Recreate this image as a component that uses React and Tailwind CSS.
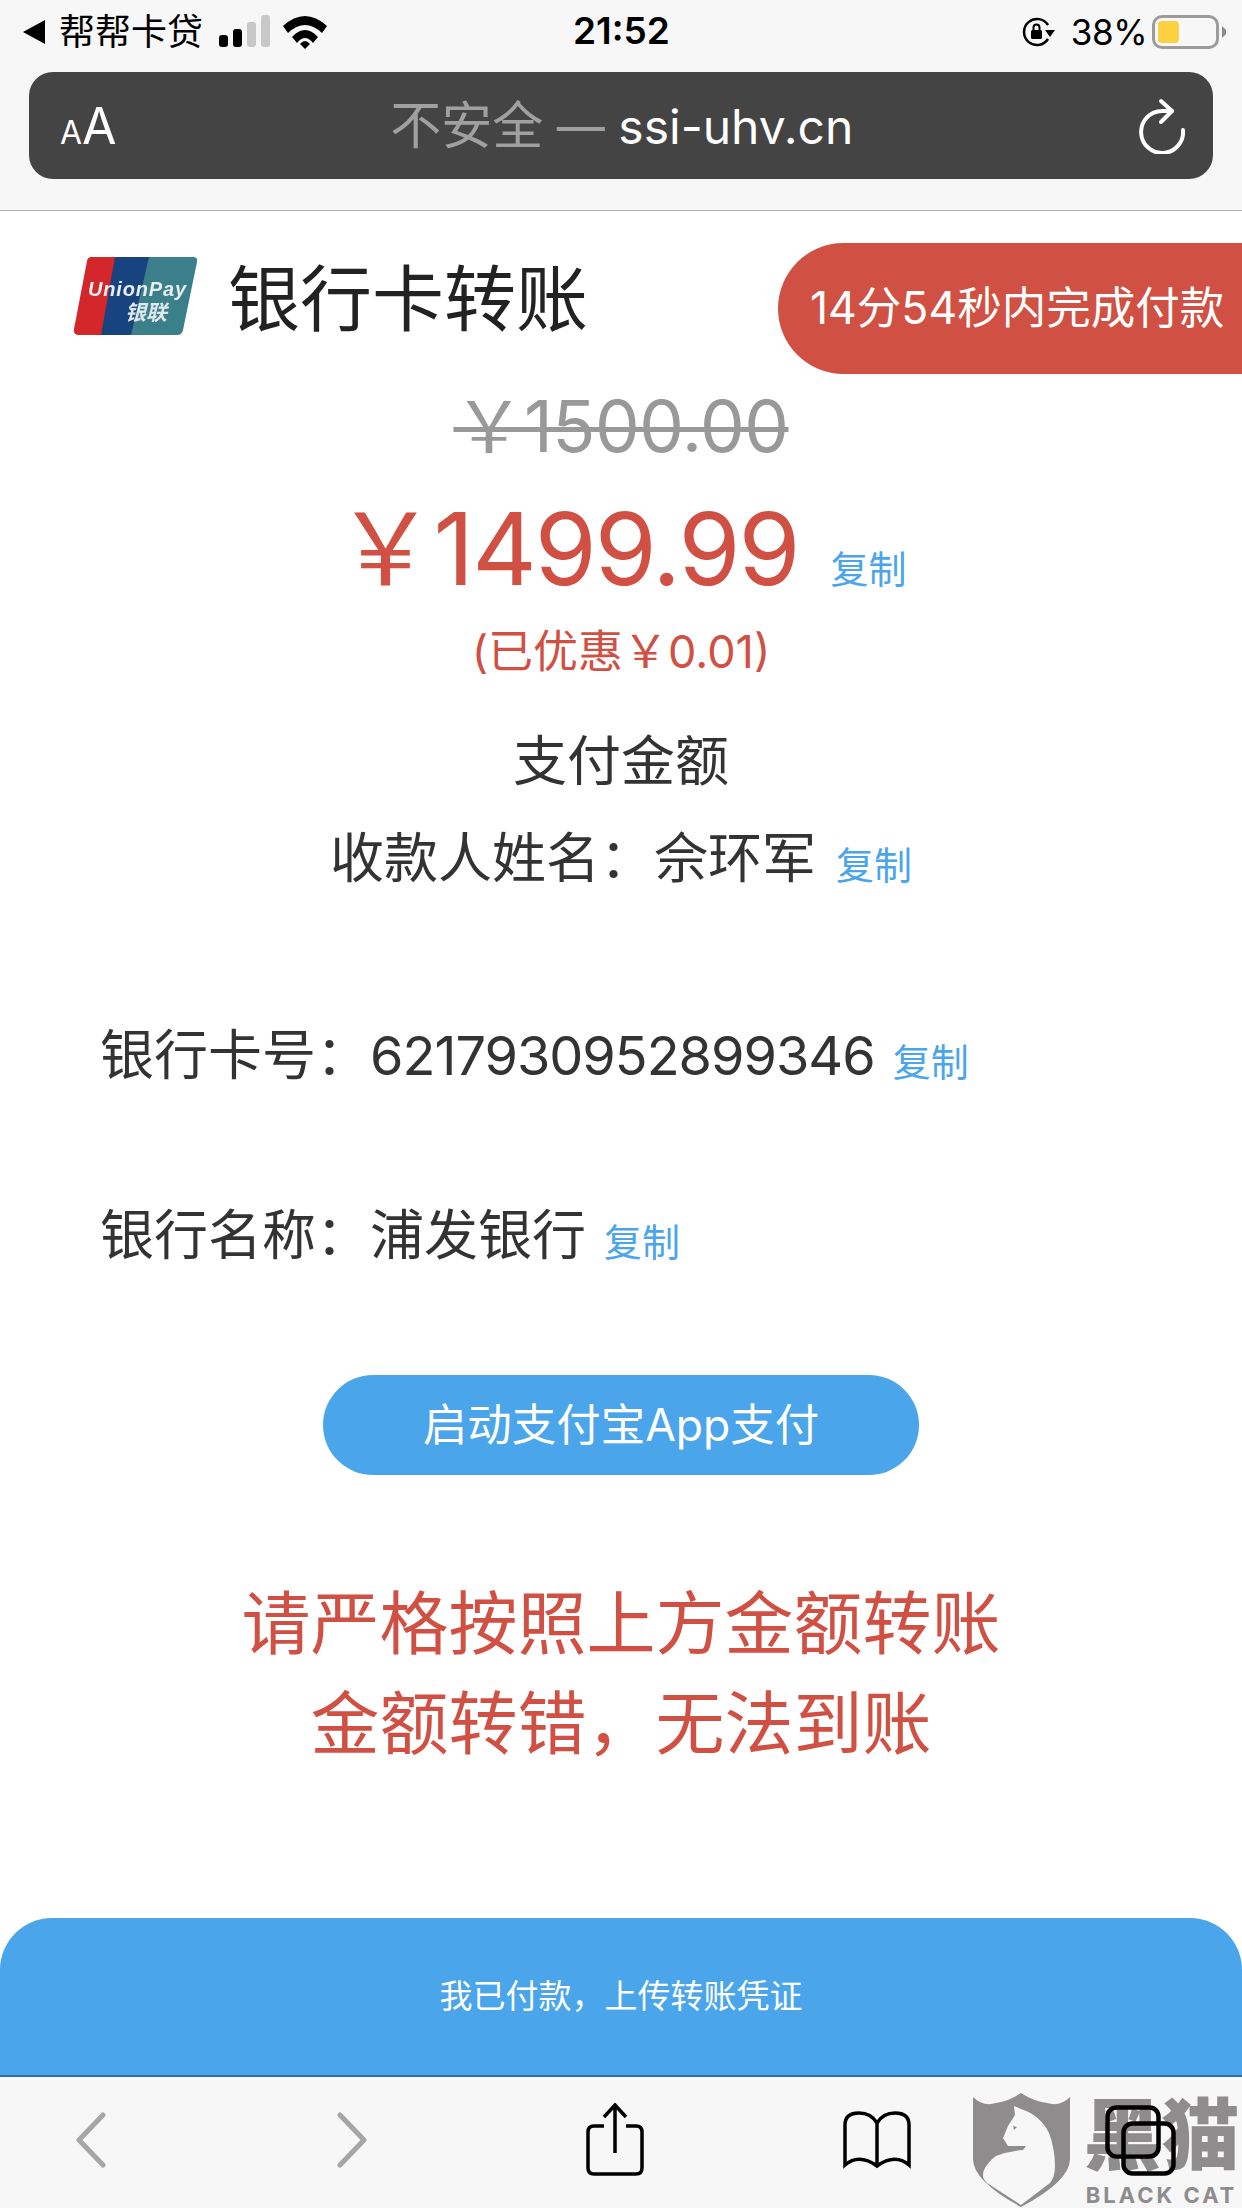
import React from 'react';

const SANS = 'font-["Inter","Noto_Sans_CJK_SC",sans-serif]';

const CopyLink = ({ className = '' }) => (
  <span className={`text-[38px] leading-none text-[#4aa5ea] ${className}`}>复制</span>
);

const UnionPayLogo = () => (
  <svg width="126" height="82" viewBox="0 0 126 82" className="mb-[6px] shrink-0 blur-[0.7px]">
    <path d="M18 2h40L40 80H6Q0 80 1 74L14 6Q15 2 18 2Z" fill="#d3272c" />
    <path d="M42 2h40L66 80H28Z" fill="#17437f" />
    <path d="M76 2h44q5 0 4 5l-14 68q-1 5-6 5H58Z" fill="#3b7f8b" />
    <text x="15" y="41" fontSize="20" fontStyle="italic" fontWeight="700" fill="#e8eef0" fontFamily="Liberation Sans" textLength="98">UnionPay</text>
    <text x="52" y="65" fontSize="21" fontStyle="italic" fontWeight="700" fill="#dfe8ec" fontFamily="Noto Sans CJK SC">银联</text>
  </svg>
);

const StatusBar = () => (
  <div className="relative flex h-[64px] items-center justify-between pl-[22px] pr-[16px] text-black">
    <div className="flex items-center">
      <svg width="24" height="26" viewBox="0 0 24 26"><path d="M23 1v24L1 13Z" fill="#000" /></svg>
      <span className="ml-[13px] text-[36px] leading-none">帮帮卡贷</span>
      <svg width="52" height="34" viewBox="0 0 52 34" className="ml-[16px]">
        <rect x="0" y="20" width="9" height="12" rx="3" fill="#000" />
        <rect x="14" y="14" width="9" height="18" rx="3" fill="#000" />
        <rect x="28" y="7" width="9" height="25" rx="3" fill="#c8c8c8" />
        <rect x="42" y="0" width="9" height="32" rx="3" fill="#c8c8c8" />
      </svg>
      <svg width="44" height="33" viewBox="0 0 44 33" className="ml-[12px]">
        <path d="M0 10Q22-10 44 10l-5 7Q22 1 5 17Z" fill="#000" />
        <path d="M9 21Q22 7 35 21l-5 6Q22 17 14 27Z" fill="#000" />
        <path d="M17 28Q22 22 27 28l-5 5Z" fill="#000" />
      </svg>
    </div>
    <span className="absolute left-[573px] top-[11px] text-[37px] font-semibold leading-[40px]">21:52</span>
    <div className="flex items-center">
      <svg width="34" height="30" viewBox="0 0 34 30">
        <path d="M27 22A13 13 0 1 1 27 8" fill="none" stroke="#000" strokeWidth="2.500" />
        <path d="M24 13h10l-5 7Z" fill="#000" />
        <rect x="10" y="13" width="11" height="9" rx="1.500" fill="#000" />
        <path d="M12.500 13v-2.500a3 3 0 0 1 6 0V13" fill="none" stroke="#000" strokeWidth="2" />
      </svg>
      <span className="ml-[16px] text-[35px] leading-none tracking-[-0.5px]">38%</span>
      <div className="ml-[5px] flex h-[34px] w-[67px] items-center rounded-[10px] border-[3px] border-[#9b9b9b] px-[3px] py-[3px]">
        <div className="h-full w-[21px] rounded-[4px] bg-[#fbd041]" />
      </div>
      <svg width="4" height="12" viewBox="0 0 4 12" className="ml-[3px]"><path d="M0 0 4 4v4L0 12Z" fill="#8a8a8a" /></svg>
    </div>
  </div>
);

const AddressBar = () => (
  <div className="mx-[29px] mt-[8px] flex h-[107px] items-center justify-between rounded-[24px] bg-[#444444] pl-[31px] pr-[28px] text-white">
    <span className="flex items-baseline leading-none">
      <span className="text-[32px]">A</span>
      <span className="text-[50px]">A</span>
    </span>
    <div className="mr-[12px] flex items-baseline leading-none">
      <span className="text-[51px] text-[#a0a0a0]">不安全</span>
      <span className="text-[48px] text-[#a0a0a0]">&nbsp;—&nbsp;</span>
      <span className="text-[48px]">ssi-uhv.cn</span>
    </div>
    <svg width="46" height="56" viewBox="19 13 46 56" fill="none" stroke="#fff" strokeWidth="4" strokeLinecap="round" strokeLinejoin="round">
      <path d="M63 45A21 21 0 1 1 42 26H52" />
      <path d="M41 16 52 26 41 37" />
    </svg>
  </div>
);

const ToolBar = () => (
  <div className="relative flex h-[133px] items-center border-t-2 border-t-[#2f6ea5] bg-[#f7f7f7] pb-[6px]">
    <svg width="36" height="56" viewBox="0 0 36 56" fill="none" stroke="#a6a6a6" strokeWidth="5" strokeLinecap="round" strokeLinejoin="round" className="ml-[73px]">
      <path d="M30 3 6 28l24 25" />
    </svg>
    <svg width="36" height="56" viewBox="0 0 36 56" fill="none" stroke="#a6a6a6" strokeWidth="5" strokeLinecap="round" strokeLinejoin="round" className="ml-[225px]">
      <path d="M6 3l24 25L6 53" />
    </svg>
    <svg width="60" height="74" viewBox="0 0 60 74" fill="none" stroke="#000" strokeWidth="3.500" className="ml-[215px]">
      <path d="M19 23H9q-6 0-6 6v36q0 6 6 6h42q6 0 6-6V29q0-6-6-6H41" />
      <path d="M30 50V3M19 14 30 2l11 12" />
    </svg>
    <svg width="68" height="58" viewBox="0 0 68 58" fill="none" stroke="#000" strokeWidth="3.500" className="ml-[198px]">
      <path d="M34 12Q28 2 16 2 2 2 2 14v40Q16 42 34 55 52 42 66 54V14Q66 2 52 2 40 2 34 12v43" />
    </svg>

    {/* watermark */}
    <div className="pointer-events-none absolute left-[973px] top-[16px] flex items-start">
      <svg width="97" height="114" viewBox="0 0 97 114">
        <path d="M0 4Q10 14 23 10 36 8 48 0 60 8 74 10 87 14 97 4V66Q97 88 48 114 0 88 0 66Z" fill="#8e8c8c" />
        <path d="M41 13 48 16Q67 22 76 40 82 56 82 73 82 84 77 90L48 112 14 90Q10 86 10 83 10 78 12 75 16 68 23 63 36 58 50 57L53 53H35L30 45 35 33 42 22Z" fill="#f7f7f7" />
        <path d="M40 33l4 1-3 3Z" fill="#8e8c8c" />
      </svg>
      <div className="ml-[13px] mt-[5px] flex w-[157px] flex-col items-center text-[#8e8c8c]">
        <span className="text-[78px] font-black leading-[76px]">黑猫</span>
        <span className="mt-[10px] whitespace-nowrap text-[22px] font-bold leading-[22px] tracking-[3px]">BLACK CAT</span>
      </div>
    </div>

    <svg width="72" height="72" viewBox="0 0 72 72" fill="none" stroke="#000" strokeWidth="4.500" className="absolute left-[1105px] top-[28px]">
      <rect x="2.500" y="2.500" width="51" height="49" rx="9" />
      <rect x="18.500" y="18.500" width="50" height="50" rx="9" />
    </svg>
  </div>
);

export default function App() {
  return (
    <div className={`flex h-[2208px] w-[1242px] flex-col overflow-hidden bg-white ${SANS}`}>
      {/* browser chrome */}
      <div className="h-[211px] border-b border-b-[#b4b4b4] bg-[#f7f7f7]">
        <StatusBar />
        <AddressBar />
      </div>

      <div className="relative flex min-h-0 flex-1 flex-col">
        <div className="flex items-center pl-[73px] pt-[43px]">
          <UnionPayLogo />
          <span className="ml-[29px] text-[72px] leading-[90px] text-[#222] blur-[0.5px]">银行卡转账</span>
        </div>
        <div className="absolute right-0 top-[32px] flex h-[131px] w-[464px] items-center whitespace-nowrap rounded-l-[66px] bg-[#d05143] pl-[32px] text-[44.500px] text-white">
          14分54秒内完成付款
        </div>

        <div className="mt-[37px] flex justify-center">
          <span className="text-[71px] leading-[90px] tracking-[-0.5px] text-[#999] line-through decoration-[5px]">￥1500.00</span>
        </div>
        <div className="mt-[15px] flex items-end justify-center">
          <span className="text-[100px] leading-[126px] tracking-[-2px] text-[#d05143]">￥1499.99</span>
          <CopyLink className="mb-[24px] ml-[32px]" />
        </div>
        <div className="mt-[10px] text-center text-[45px] leading-[60px] text-[#d05143]">(已优惠￥0.01)</div>
        <div className="mt-[48px] text-center text-[54px] leading-[64px] text-[#333]">支付金额</div>
        <div className="mt-[30px] flex items-end justify-center">
          <span className="text-[54px] leading-[70px] text-[#333]">收款人姓名：佘环军</span>
          <CopyLink className="mb-[10px] ml-[20px]" />
        </div>

        <div className="mt-[127px] flex items-end pl-[100px]">
          <span className="text-[54px] leading-[70px] tracking-[-1px] text-[#333]">
            <span className="tracking-normal">银行卡号：</span>6217930952899346
          </span>
          <CopyLink className="mb-[10px] ml-[18px]" />
        </div>
        <div className="mt-[110px] flex items-end pl-[100px]">
          <span className="text-[54px] leading-[70px] text-[#333]">银行名称：浦发银行</span>
          <CopyLink className="mb-[10px] ml-[18px]" />
        </div>

        <div className="mx-auto mt-[104px] flex h-[100px] w-[596px] items-center justify-center rounded-full bg-[#4aa5ea] text-[44.500px] text-white">
          启动支付宝App支付
        </div>

        <div className="mt-[99px] text-center text-[69px] leading-[100px] text-[#d05143]">
          <div>请严格按照上方金额转账</div>
          <div>金额转错，无法到账</div>
        </div>

        <div className="mt-auto flex h-[157px] items-center justify-center rounded-t-[52px] bg-[#4aa5ea] text-[33px] text-white">
          我已付款，上传转账凭证
        </div>
      </div>

      <ToolBar />
    </div>
  );
}
